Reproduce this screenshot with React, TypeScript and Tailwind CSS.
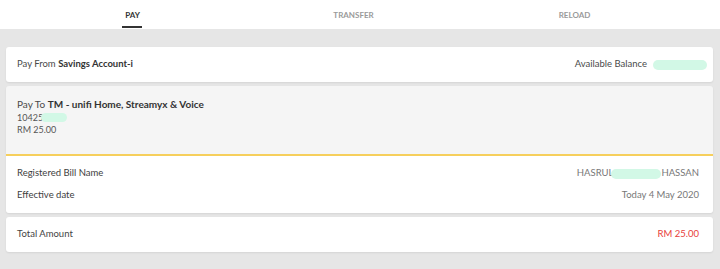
import React from 'react';

const tabs = [
  { label: 'PAY', active: true },
  { label: 'TRANSFER', active: false },
  { label: 'RELOAD', active: false },
];

function Blur({ className }: { className: string }) {
  // redacted value, drawn as a soft mint smudge
  return <span className={`inline-block rounded-full bg-[#d2f8e6] ${className}`} />;
}

export default function App() {
  return (
    <div className="w-[720px] h-[269px] bg-[#e6e6e6] font-['Lato','Noto_Sans',sans-serif] text-[9.5px] overflow-hidden">
      {/* Tabs */}
      <div className="h-[29px] bg-white flex pl-[22px]">
        {tabs.map(t => (
          <div key={t.label} className="w-[221px] flex justify-center">
            <div className="relative h-full flex items-center">
              <span className={`text-[8px] font-bold ${t.active ? 'text-[#333]' : 'text-[#9a9a9a]'}`}>{t.label}</span>
              {t.active && <span className="absolute bottom-[1px] left-1/2 -translate-x-1/2 w-[20px] h-[2px] bg-[#333]" />}
            </div>
          </div>
        ))}
      </div>

      <div className="pl-[6px] pr-[7px] pt-[18px] space-y-[4px]">
        {/* Pay from */}
        <div className="h-[35px] bg-white rounded-[3px] shadow-[0_1px_2px_rgba(0,0,0,0.08)] flex items-center justify-between pl-[11px] pr-[6px]">
          <div className="text-[#4a4a4a]">
            Pay From <span className="font-bold text-[#333]">Savings Account-i</span>
          </div>
          <div className="flex items-center gap-[6px] text-[#4a4a4a]">
            Available Balance
            <Blur className="w-[54px] h-[10px]" />
          </div>
        </div>

        {/* Pay to + details */}
        <div className="rounded-[3px] overflow-hidden shadow-[0_1px_2px_rgba(0,0,0,0.08)]">
          <div className="bg-[#f5f5f5] h-[68px] pl-[11px] pt-[12px] leading-[12.5px] text-[#444]">
            <div className="text-[10px] text-[#4a4a4a]">
              Pay To <span className="font-bold text-[#333]">TM - unifi Home, Streamyx &amp; Voice</span>
            </div>
            <div className="flex items-center text-[9px] text-[#555] mt-[1px]">
              10425<Blur className="w-[26px] h-[9px] -ml-[2px]" />
            </div>
            <div className="text-[9px] text-[#555]">RM 25.00</div>
          </div>
          <div className="h-[1.5px] bg-[#f6cf5c]" />
          <div className="bg-white h-[57px] pl-[11px] pr-[14px] pt-[7px] text-[#3d3d3d]">
            <div className="h-[22px] flex items-center justify-between">
              <span>Registered Bill Name</span>
              <span className="flex items-center text-[#777]">
                HASRUL<Blur className="w-[50px] h-[10px] -ml-[2px]" />HASSAN
              </span>
            </div>
            <div className="h-[22px] flex items-center justify-between">
              <span>Effective date</span>
              <span className="text-[#777]">Today 4 May 2020</span>
            </div>
          </div>
        </div>

        {/* Total */}
        <div className="h-[35px] bg-white rounded-[3px] shadow-[0_1px_2px_rgba(0,0,0,0.08)] flex items-center justify-between pl-[11px] pr-[14px]">
          <span className="text-[#444]">Total Amount</span>
          <span className="text-[#e8403a]">RM 25.00</span>
        </div>
      </div>
    </div>
  );
}
